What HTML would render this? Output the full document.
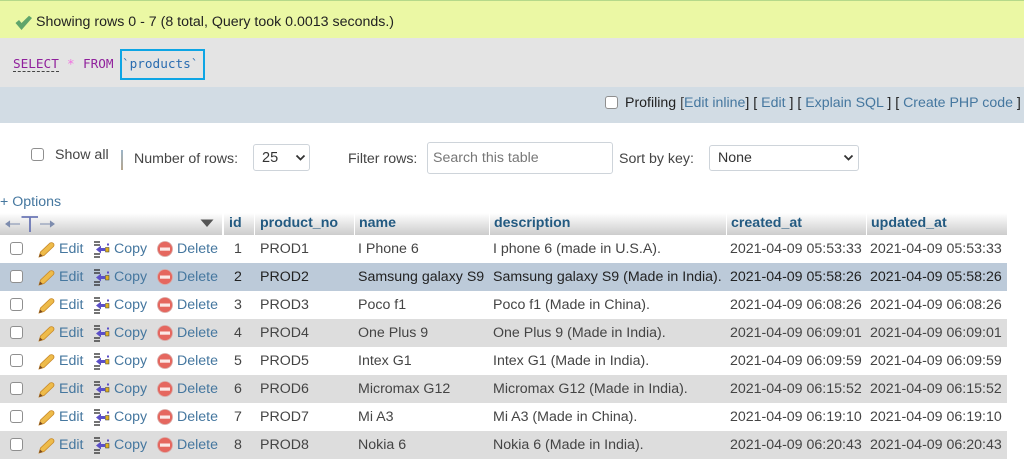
<!DOCTYPE html>
<html><head><meta charset="utf-8">
<style>
html,body{margin:0;padding:0;width:1024px;height:470px;overflow:hidden;background:#fff}
body{position:relative;font-family:"Liberation Sans",sans-serif;font-size:14.2px;color:#444;filter:blur(.35px)}
.a{position:absolute;white-space:nowrap;line-height:18px}
.b{position:absolute}
.l{color:#45779f}
.cb{position:absolute;width:11px;height:11px;border:1.5px solid #8f8f8f;border-radius:3px;background:#fff}
.h{position:absolute;top:213px;height:22px;background:linear-gradient(#fff,#ccc)}
.ht{position:absolute;top:214px;font-weight:bold;color:#235a81;line-height:18px;white-space:nowrap}
.r{position:absolute;left:0;width:1007px;height:28px}
.r .a{top:5px}
.m{font-family:"DejaVu Sans Mono",monospace;font-size:12.7px;line-height:16px}
.sel{position:absolute;background:#fff;border:1px solid #ced4da;border-radius:3px;box-sizing:border-box;color:#333}
svg{position:absolute;overflow:visible}
</style></head><body>
<div class="b" style="left:0;top:0;width:1024px;height:38px;background:#ebf8a4;border-top:1px solid #b5d98a;box-sizing:border-box"></div>
<svg style="left:15px;top:15px" width="17" height="15" viewBox="0 0 17 15"><path d="M0.500 8 L4 5 L6.500 8 L14 0.800 L17 3 L6.500 15 Z" fill="#5fa56b"/></svg>
<div class="a" style="left:36px;top:13px;color:#222;font-size:14.200px">Showing rows 0 - 7 (8 total, Query took 0.0013 seconds.)</div>
<div class="b" style="left:0;top:38px;width:1024px;height:49px;background:#e4e4e4"></div>
<div class="a m" style="left:13px;top:56px;color:#90219c;border-bottom:1px dashed #444;height:15px">SELECT</div>
<div class="a m" style="left:67px;top:56px;color:#f070e0">*</div>
<div class="a m" style="left:83px;top:56px;color:#90219c">FROM</div>
<div class="b" style="left:120px;top:49px;width:85px;height:31px;border:2px solid #0ea5e4;box-sizing:border-box"></div>
<div class="a m" style="left:122px;top:56px;color:#2a6cb0">`products`</div>
<div class="b" style="left:0;top:87px;width:1024px;height:36px;background:#d2dce4"></div>
<div class="cb" style="left:605px;top:96px"></div>
<div class="a" style="left:625px;top:94px;color:#222;font-size:14.160px">Profiling <span style="color:#444">[</span><span class="l">Edit inline</span>] [ <span class="l">Edit</span> ] [ <span class="l">Explain SQL</span> ] [ <span class="l">Create PHP code</span> ]</div>

<div class="cb" style="left:31px;top:148px"></div>
<div class="a" style="left:55px;top:146px">Show all</div>
<div class="b" style="left:121px;top:150px;width:2px;height:20px;background:linear-gradient(#9cb5c8,#b5a58c)"></div>
<div class="a" style="left:134px;top:150px">Number of rows:</div>
<div class="sel" style="left:253px;top:144px;width:57px;height:27px;padding:4px 8px;line-height:18px;font-size:14.500px">25</div>
<svg style="left:295px;top:154px" width="12" height="8"><path d="M1.500 1.500 L5.500 5.500 L9.500 1.500" fill="none" stroke="#333" stroke-width="1.800"/></svg>
<div class="a" style="left:348px;top:150px">Filter rows:</div>
<div class="sel" style="left:427px;top:142px;width:186px;height:32px;padding:5px;line-height:20px;color:#777">Search this table</div>
<div class="a" style="left:619px;top:150px">Sort by key:</div>
<div class="sel" style="left:709px;top:145px;width:150px;height:26px;padding:3px 8px;line-height:18px">None</div>
<svg style="left:843px;top:154px" width="12" height="8"><path d="M1.500 1.500 L5.500 5.500 L9.500 1.500" fill="none" stroke="#333" stroke-width="1.800"/></svg>
<div class="a" style="left:0;top:193px;color:#45779f">+ Options</div>

<div class="h" style="left:0;width:222px"></div>
<div class="h" style="left:224px;width:30px"></div>
<div class="h" style="left:255px;width:99px"></div>
<div class="h" style="left:355px;width:134px"></div>
<div class="h" style="left:490px;width:236px"></div>
<div class="h" style="left:727px;width:139px"></div>
<div class="h" style="left:867px;width:140px"></div>
<svg style="left:0;top:213px" width="60" height="22" viewBox="0 0 60 22"><path d="M6 11 H20 M6 11 L9.500 8.500 V13.500 Z M40 11 H54 M54 11 L50.500 8.500 V13.500 Z" stroke="#7d8cae" stroke-width="1.100" fill="#7d8cae"/><path d="M21.500 4 H38 M30 4 V19" stroke="#6b77b5" stroke-width="1.800" fill="none"/></svg>
<svg style="left:200px;top:219px" width="14" height="9"><path d="M0.500 0.500 H13.500 L7 8 Z" fill="#555"/></svg>
<div class="ht" style="left:229px">id</div>
<div class="ht" style="left:260px">product_no</div>
<div class="ht" style="left:359px">name</div>
<div class="ht" style="left:494px">description</div>
<div class="ht" style="left:731px">created_at</div>
<div class="ht" style="left:871px">updated_at</div>

<svg width="0" height="0" style="position:absolute"><defs>
<g id="p"><path d="M1 16 L2.500 11 L12 2 Q14 1 15.500 2.500 Q16.500 4 15.500 5.500 L6 14.500 Z" fill="#eebb4a" stroke="#c98a2a" stroke-width=".8"/><path d="M1 16 L2 12.500 L4.800 15 Z" fill="#7a4a20"/></g>
<g id="c"><path d="M1 1 H7 M1 4 H7 M1 13 H7 M1 16 H7" stroke="#222" stroke-width="1.300"/><path d="M3 8.500 L8 4.500 V7 H12 V10 H8 V12.500 Z" fill="#5b4fc8"/><rect x="12.500" y="6.500" width="3.500" height="4.500" fill="#e0b020" stroke="#333" stroke-width=".5"/><rect x="14" y="2.500" width="2" height="2" fill="#5b4fc8"/></g>
<g id="d"><circle cx="8" cy="8" r="7.500" fill="#e5675f"/><circle cx="8" cy="8" r="7.500" fill="none" stroke="#d9a9a5" stroke-width=".8"/><rect x="3" y="6.500" width="10" height="3.200" fill="#fbe9e7"/></g>
</defs></svg>

<div class="r" style="top:235px;background:#fff"><div class="cb" style="left:10px;top:7px"></div><svg style="left:38px;top:6px" width="18" height="18"><use href="#p"/></svg><div class="a l" style="left:59px">Edit</div><svg style="left:93px;top:6px" width="18" height="18"><use href="#c"/></svg><div class="a l" style="left:114px">Copy</div><svg style="left:157px;top:6px" width="16" height="16"><use href="#d"/></svg><div class="a l" style="left:177px">Delete</div><div class="a" style="left:234px">1</div><div class="a" style="left:260px">PROD1</div><div class="a" style="left:358px">I Phone 6</div><div class="a" style="left:493px">I phone 6 (made in U.S.A).</div><div class="a" style="left:730px">2021-04-09 05:53:33</div><div class="a" style="left:870px">2021-04-09 05:53:33</div></div>

<div class="r" style="top:263px;background:#bccad9;color:#222"><div class="cb" style="left:10px;top:7px"></div><svg style="left:38px;top:6px" width="18" height="18"><use href="#p"/></svg><div class="a l" style="left:59px">Edit</div><svg style="left:93px;top:6px" width="18" height="18"><use href="#c"/></svg><div class="a l" style="left:114px">Copy</div><svg style="left:157px;top:6px" width="16" height="16"><use href="#d"/></svg><div class="a l" style="left:177px">Delete</div><div class="a" style="left:234px">2</div><div class="a" style="left:260px">PROD2</div><div class="a" style="left:358px">Samsung galaxy S9</div><div class="a" style="left:493px">Samsung galaxy S9 (Made in India).</div><div class="a" style="left:730px">2021-04-09 05:58:26</div><div class="a" style="left:870px">2021-04-09 05:58:26</div></div>

<div class="r" style="top:291px;background:#fff"><div class="cb" style="left:10px;top:7px"></div><svg style="left:38px;top:6px" width="18" height="18"><use href="#p"/></svg><div class="a l" style="left:59px">Edit</div><svg style="left:93px;top:6px" width="18" height="18"><use href="#c"/></svg><div class="a l" style="left:114px">Copy</div><svg style="left:157px;top:6px" width="16" height="16"><use href="#d"/></svg><div class="a l" style="left:177px">Delete</div><div class="a" style="left:234px">3</div><div class="a" style="left:260px">PROD3</div><div class="a" style="left:358px">Poco f1</div><div class="a" style="left:493px">Poco f1 (Made in China).</div><div class="a" style="left:730px">2021-04-09 06:08:26</div><div class="a" style="left:870px">2021-04-09 06:08:26</div></div>

<div class="r" style="top:319px;background:#ddd"><div class="cb" style="left:10px;top:7px"></div><svg style="left:38px;top:6px" width="18" height="18"><use href="#p"/></svg><div class="a l" style="left:59px">Edit</div><svg style="left:93px;top:6px" width="18" height="18"><use href="#c"/></svg><div class="a l" style="left:114px">Copy</div><svg style="left:157px;top:6px" width="16" height="16"><use href="#d"/></svg><div class="a l" style="left:177px">Delete</div><div class="a" style="left:234px">4</div><div class="a" style="left:260px">PROD4</div><div class="a" style="left:358px">One Plus 9</div><div class="a" style="left:493px">One Plus 9 (Made in India).</div><div class="a" style="left:730px">2021-04-09 06:09:01</div><div class="a" style="left:870px">2021-04-09 06:09:01</div></div>

<div class="r" style="top:347px;background:#fff"><div class="cb" style="left:10px;top:7px"></div><svg style="left:38px;top:6px" width="18" height="18"><use href="#p"/></svg><div class="a l" style="left:59px">Edit</div><svg style="left:93px;top:6px" width="18" height="18"><use href="#c"/></svg><div class="a l" style="left:114px">Copy</div><svg style="left:157px;top:6px" width="16" height="16"><use href="#d"/></svg><div class="a l" style="left:177px">Delete</div><div class="a" style="left:234px">5</div><div class="a" style="left:260px">PROD5</div><div class="a" style="left:358px">Intex G1</div><div class="a" style="left:493px">Intex G1 (Made in India).</div><div class="a" style="left:730px">2021-04-09 06:09:59</div><div class="a" style="left:870px">2021-04-09 06:09:59</div></div>

<div class="r" style="top:375px;background:#ddd"><div class="cb" style="left:10px;top:7px"></div><svg style="left:38px;top:6px" width="18" height="18"><use href="#p"/></svg><div class="a l" style="left:59px">Edit</div><svg style="left:93px;top:6px" width="18" height="18"><use href="#c"/></svg><div class="a l" style="left:114px">Copy</div><svg style="left:157px;top:6px" width="16" height="16"><use href="#d"/></svg><div class="a l" style="left:177px">Delete</div><div class="a" style="left:234px">6</div><div class="a" style="left:260px">PROD6</div><div class="a" style="left:358px">Micromax G12</div><div class="a" style="left:493px">Micromax G12 (Made in India).</div><div class="a" style="left:730px">2021-04-09 06:15:52</div><div class="a" style="left:870px">2021-04-09 06:15:52</div></div>

<div class="r" style="top:403px;background:#fff"><div class="cb" style="left:10px;top:7px"></div><svg style="left:38px;top:6px" width="18" height="18"><use href="#p"/></svg><div class="a l" style="left:59px">Edit</div><svg style="left:93px;top:6px" width="18" height="18"><use href="#c"/></svg><div class="a l" style="left:114px">Copy</div><svg style="left:157px;top:6px" width="16" height="16"><use href="#d"/></svg><div class="a l" style="left:177px">Delete</div><div class="a" style="left:234px">7</div><div class="a" style="left:260px">PROD7</div><div class="a" style="left:358px">Mi A3</div><div class="a" style="left:493px">Mi A3 (Made in China).</div><div class="a" style="left:730px">2021-04-09 06:19:10</div><div class="a" style="left:870px">2021-04-09 06:19:10</div></div>

<div class="r" style="top:431px;background:#ddd"><div class="cb" style="left:10px;top:7px"></div><svg style="left:38px;top:6px" width="18" height="18"><use href="#p"/></svg><div class="a l" style="left:59px">Edit</div><svg style="left:93px;top:6px" width="18" height="18"><use href="#c"/></svg><div class="a l" style="left:114px">Copy</div><svg style="left:157px;top:6px" width="16" height="16"><use href="#d"/></svg><div class="a l" style="left:177px">Delete</div><div class="a" style="left:234px">8</div><div class="a" style="left:260px">PROD8</div><div class="a" style="left:358px">Nokia 6</div><div class="a" style="left:493px">Nokia 6 (Made in India).</div><div class="a" style="left:730px">2021-04-09 06:20:43</div><div class="a" style="left:870px">2021-04-09 06:20:43</div></div>
</body></html>
